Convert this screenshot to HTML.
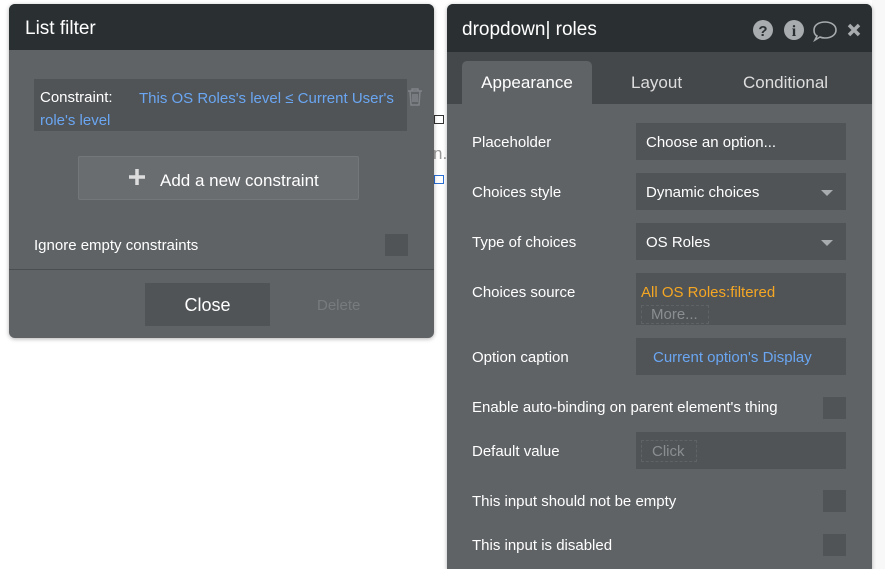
<!DOCTYPE html>
<html><head><style>
*{box-sizing:border-box;margin:0;padding:0}
html,body{width:885px;height:569px;overflow:hidden}
body{background:#fff;position:relative;font-family:"Liberation Sans",sans-serif;color:#fff;font-size:15px}
.a{position:absolute}
.p{background:#5f6366;border-radius:6px;box-shadow:0 1px 4px rgba(0,0,0,.3)}
.hd{background:#2a2f32;border-radius:6px 6px 0 0;font-size:19px;padding-left:16px}
.in{background:#505457}
.cb{background:#505457;width:23px;height:22px}
.lbl{left:25px;font-size:15px}
.tri{width:0;height:0;border-left:6px solid transparent;border-right:6px solid transparent;border-top:6px solid #a8acaf}
</style></head><body>
<div class="a" style="left:872px;top:0;width:13px;height:569px;background:#f8f8f8"></div>
<div class="a" style="left:434px;top:115px;width:10px;height:9px;border:1px solid #333;background:#fff"></div>
<div class="a" style="left:434px;top:175px;width:10px;height:9px;border:1px solid #2a6fd6;background:#fff"></div>
<div class="a" style="left:433px;top:144px;color:#999;font-size:17px">n.</div>

<!-- left -->
<div class="a p" style="left:9px;top:4px;width:425px;height:334px">
 <div class="a hd" style="left:0;top:0;width:425px;height:46px;line-height:50px">List filter</div>
 <div class="a" style="left:25px;top:75px;width:373px;height:52px;background:#505457"></div>
 <div class="a" style="left:31px;top:85px;font-size:15px">Constraint:</div>
 <div class="a" style="left:130px;top:86px;font-size:15px;color:#6aa6f2;white-space:nowrap">This OS Roles's level ≤ Current User's</div>
 <div class="a" style="left:31px;top:108px;font-size:15px;color:#6aa6f2">role's level</div>
 <svg class="a" style="left:398px;top:84px" width="16" height="18" viewBox="0 0 16 18"><path d="M1 3h14M5 3V1h6v2M3 3l1 14h8l1-14M6 6v8M8 6v8M10 6v8" stroke="#808488" stroke-width="1.5" fill="none"/></svg>
 <div class="a" style="left:69px;top:152px;width:281px;height:44px;background:#696d70;border:1px solid #73777a;border-radius:2px"></div>
 <svg class="a" style="left:119px;top:164px" width="18" height="18"><path d="M9 1v16M1 9h16" stroke="#ddd" stroke-width="3.5"/></svg>
 <div class="a" style="left:151px;top:167px;font-size:17px">Add a new constraint</div>
 <div class="a" style="left:25px;top:233px;font-size:15px">Ignore empty constraints</div>
 <div class="a cb" style="left:376px;top:230px"></div>
 <div class="a" style="left:0;top:265px;width:425px;height:1px;background:#4a4e51"></div>
 <div class="a" style="left:136px;top:279px;width:125px;height:43px;background:#505457;text-align:center;line-height:45px;font-size:18px">Close</div>
 <div class="a" style="left:308px;top:293px;font-size:15px;color:#777b7e">Delete</div>
</div>

<!-- right -->
<div class="a p" style="left:447px;top:4px;width:425px;height:570px">
 <div class="a hd" style="left:0;top:0;width:425px;height:48px;line-height:52px;padding-left:15px">dropdown| roles</div>
 <svg class="a" style="left:305px;top:14px" width="112" height="26" viewBox="0 0 112 26">
  <circle cx="11" cy="12" r="10" fill="#a8acaf"/><text x="11" y="18" text-anchor="middle" font-family="Liberation Sans" font-weight="bold" font-size="15" fill="#2a2f32">?</text>
  <circle cx="42" cy="12" r="10" fill="#a8acaf"/><text x="42" y="18" text-anchor="middle" font-family="Liberation Serif" font-weight="bold" font-size="16" fill="#2a2f32">i</text>
  <path d="M62 12c0-5 5-8 11-8s11 3 11 8-5 8-11 8c-2 0-3 0-5-1l-5 3 2-4c-2-1-3-3-3-6z" fill="none" stroke="#a8acaf" stroke-width="1.6"/>
  <path d="M97 7l10 10M107 7l-10 10" stroke="#a8acaf" stroke-width="3.5"/>
 </svg>
 <div class="a" style="left:0;top:48px;width:425px;height:52px;background:#44484b"></div>
 <div class="a" style="left:15px;top:57px;width:130px;height:43px;background:#5f6366;border-radius:5px 5px 0 0;text-align:center;line-height:44px;font-size:17px">Appearance</div>
 <div class="a" style="left:184px;top:69px;font-size:17px;color:#ddd">Layout</div>
 <div class="a" style="left:296px;top:69px;font-size:17px;color:#ddd">Conditional</div>

 <div class="a lbl" style="top:130px">Placeholder</div>
 <div class="a in" style="left:189px;top:119px;width:210px;height:37px;padding:11px 10px;font-size:15px">Choose an option...</div>
 <div class="a lbl" style="top:180px">Choices style</div>
 <div class="a in" style="left:189px;top:169px;width:210px;height:37px;padding:11px 10px">Dynamic choices</div>
 <div class="a tri" style="left:374px;top:186px"></div>
 <div class="a lbl" style="top:230px">Type of choices</div>
 <div class="a in" style="left:189px;top:219px;width:210px;height:37px;padding:11px 10px">OS Roles</div>
 <div class="a tri" style="left:374px;top:236px"></div>
 <div class="a lbl" style="top:280px">Choices source</div>
 <div class="a in" style="left:189px;top:269px;width:210px;height:52px"></div>
 <div class="a" style="left:194px;top:280px;color:#f5a623">All OS Roles:filtered</div>
 <div class="a" style="left:194px;top:301px;width:68px;height:19px;border:1px dashed #5f6366;color:#8a8e91;padding-left:9px;line-height:18px">More...</div>
 <div class="a lbl" style="top:345px">Option caption</div>
 <div class="a in" style="left:189px;top:334px;width:210px;height:37px;padding:11px 17px;color:#6aa6f2">Current option's Display</div>
 <div class="a lbl" style="top:395px">Enable auto-binding on parent element's thing</div>
 <div class="a cb" style="left:376px;top:393px"></div>
 <div class="a lbl" style="top:439px">Default value</div>
 <div class="a in" style="left:189px;top:428px;width:210px;height:37px"></div>
 <div class="a" style="left:194px;top:436px;width:56px;height:22px;border:1px dashed #5f6366;color:#8a8e91;padding-left:10px;line-height:21px">Click</div>
 <div class="a lbl" style="top:489px">This input should not be empty</div>
 <div class="a cb" style="left:376px;top:486px"></div>
 <div class="a lbl" style="top:533px">This input is disabled</div>
 <div class="a cb" style="left:376px;top:530px"></div>
</div>
</body></html>
